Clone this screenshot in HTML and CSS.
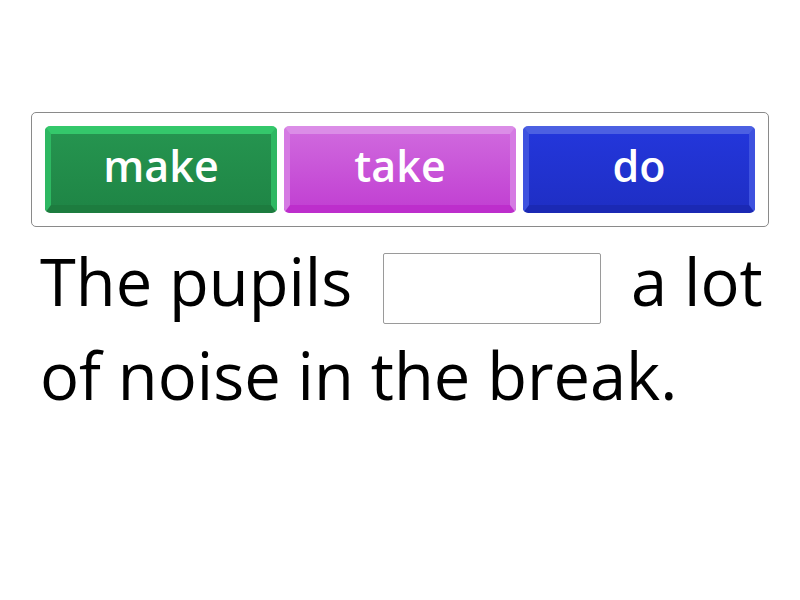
FILE: index.html
```html
<!DOCTYPE html>
<html>
<head>
<meta charset="utf-8">
<link rel="stylesheet" href="styles.css">
</head>
<body>
<main class="page">
  <div class="options">
    <div class="opt opt-green">make</div>
    <div class="opt opt-purple">take</div>
    <div class="opt opt-blue">do</div>
  </div>
  <p class="sentence">The pupils <span class="blank"></span> a lot of noise in the break.</p>
</main>
</body>
</html>
```

FILE: styles.css
```css
html, body {
  margin: 0;
  padding: 0;
  background: #fff;
}
.page {
  padding: 112px 31px 0 31px;
  font-family: "Open Sans", "Liberation Sans", sans-serif;
}
.options {
  display: flex;
  gap: 7px;
  padding: 13px;
  border: 1px solid #8a8a8a;
  border-radius: 5px;
}
.opt {
  flex: 1;
  box-sizing: content-box;
  height: 63px;
  padding-bottom: 8px;
  border-style: solid;
  border-width: 8px 6px 8px 6px;
  border-radius: 5px;
  display: flex;
  align-items: center;
  justify-content: center;
  color: #fff;
  font-weight: 600;
  font-size: 43px;
  line-height: 1;
}
.opt-green {
  border-color: #34c86b #2eb862 #1d7c3f #2eb862;
  background: linear-gradient(#25944f, #1f8646);
}
.opt-purple {
  border-color: #db8de7 #d57ae3 #bd2ecc #d57ae3;
  background: linear-gradient(#cf67dd, #c242d3);
}
.opt-blue {
  border-color: #4c60e2 #3e52df #1b29b4 #3e52df;
  background: linear-gradient(#2336da, #1f2fc6);
}
.sentence {
  margin: 0;
  padding: 7px 0 0 9px;
  font-size: 65px;
  line-height: 94px;
  color: #000;
}
.blank {
  display: inline-block;
  width: 216px;
  height: 69px;
  border: 1px solid #9a9a9a;
  border-radius: 2px;
  vertical-align: middle;
  margin: 0 13px 0 14px;
}
```
